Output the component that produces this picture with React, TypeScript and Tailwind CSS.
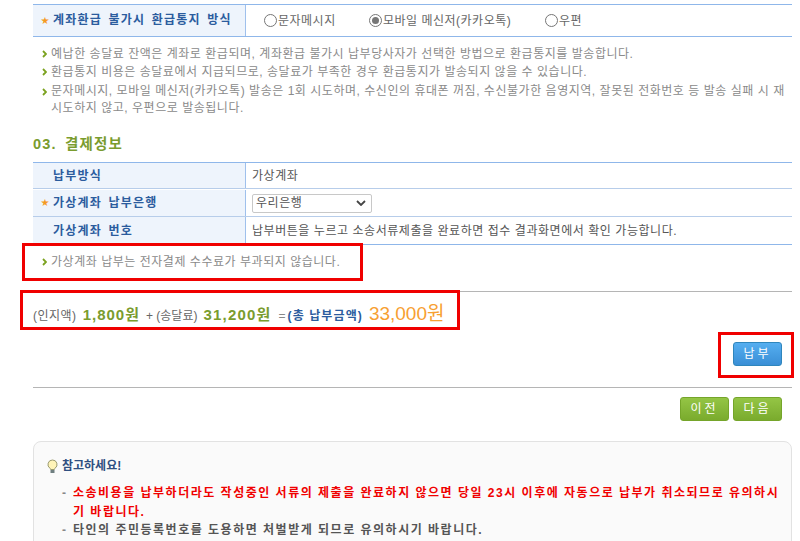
const font = { fontFamily: '"Liberation Sans", "Noto Sans CJK KR", sans-serif' };

function Bullet({ children, extra }: { children: React.ReactNode; extra?: string }) {
  return (
    <li className={`flex items-start pl-[9px] ${extra ?? ""}`}>
      <svg width="5" height="8" viewBox="0 0 5 8" className="mt-[5px] mr-[4px] shrink-0">
        <path d="M1 1l3 3-3 3" fill="none" stroke="#7ba21f" strokeWidth="1.8" />
      </svg>
      <span>{children}</span>
    </li>
  );
}

function Star() {
  return <span className="absolute left-[8px] top-1/2 -translate-y-1/2 text-[8px] leading-[10px] text-[#f59a23]">★</span>;
}

function Radio({ on, label, w }: { on?: boolean; label: string; w: string }) {
  return (
    <span className={`flex items-center ${w}`}>
      <span className="w-[13px] h-[13px] rounded-full border border-[#767676] bg-white flex items-center justify-center shrink-0">
        {on && <span className="w-[7px] h-[7px] rounded-full bg-[#777]" />}
      </span>
      <span className="ml-[1px]">{label}</span>
    </span>
  );
}

function Row({ label, star, children, h }: { label: string; star?: boolean; children: React.ReactNode; h: string }) {
  return (
    <div className={`flex ${h}`}>
      <div className="relative w-[213px] shrink-0 bg-[#eef4fc] border-r border-[#9fc0ec] flex items-center pl-[20px] font-bold text-[#2b5c9e] text-[12px] tracking-[1.2px] [word-spacing:2px]">
        {star && <Star />}
        {label}
      </div>
      <div className="flex-1 flex items-center pl-[6px] text-[#555] text-[12px] tracking-[0.55px]">{children}</div>
    </div>
  );
}

export default function App() {
  return (
    <div className="relative w-[800px] h-[541px] overflow-hidden bg-white" style={font}>
      <div className="ml-[33px] w-[759px] pt-[4px]">
        <div className="border-y border-[#8fb7ea]">
          <div className="flex h-[31px]">
            <div className="relative w-[213px] shrink-0 bg-[#eef4fc] border-r border-[#9fc0ec] flex items-center pl-[20px] font-bold text-[#2b5c9e] text-[12px] tracking-[1.2px] [word-spacing:2px] pb-[2px]">
              <Star />
              계좌환급 불가시 환급통지 방식
            </div>
            <div className="flex-1 flex items-center pl-[18px] text-[12px] text-[#666] tracking-[0.5px]">
              <Radio label="문자메시지" w="w-[105px]" />
              <Radio on label="모바일 메신저(카카오톡)" w="w-[176px]" />
              <Radio label="우편" w="w-[50px]" />
            </div>
          </div>
        </div>

        <ul className="mt-[8px] text-[12px] leading-[18px] text-[#8a8a8a] tracking-[0.53px]">
          <Bullet>예납한 송달료 잔액은 계좌로 환급되며, 계좌환급 불가시 납부당사자가 선택한 방법으로 환급통지를 발송합니다.</Bullet>
          <Bullet>환급통지 비용은 송달료에서 지급되므로, 송달료가 부족한 경우 환급통지가 발송되지 않을 수 있습니다.</Bullet>
          <Bullet extra="mt-[2px] leading-[17px]">
            문자메시지, 모바일 메신저(카카오톡) 발송은 1회 시도하며, 수신인의 휴대폰 꺼짐, 수신불가한 음영지역, 잘못된 전화번호 등 발송 실패 시 재 시도하지 않고, 우편으로 발송됩니다.
          </Bullet>
        </ul>

        <h3 className="mt-[17px] text-[14.5px] leading-[20px] font-bold text-[#7a9c2e] tracking-[1.2px] [word-spacing:3px]">03. 결제정보</h3>

        <div className="mt-[8px] border-y border-[#8fb7ea] divide-y divide-[#b7cdea]">
          <Row label="납부방식" h="h-[26px]">가상계좌</Row>
          <Row label="가상계좌 납부은행" star h="h-[28px] pt-[1px]">
            <span className="w-[120px] h-[19px] border border-[#c8c8c8] rounded-[2px] flex items-center justify-between px-[3px]">
              우리은행
              <svg width="10" height="6" viewBox="0 0 10 6" className="mr-[2px]">
                <path d="M1 1l4 4 4-4" fill="none" stroke="#444" strokeWidth="1.8" />
              </svg>
            </span>
          </Row>
          <Row label="가상계좌 번호" h="h-[27px]">
            납부버튼을 누르고 소송서류제출을 완료하면 접수 결과화면에서 확인 가능합니다.
          </Row>
        </div>

        <ul className="mt-[8px] text-[12px] leading-[18px] text-[#8a8a8a] tracking-[0.53px]">
          <Bullet>가상계좌 납부는 전자결제 수수료가 부과되지 않습니다.</Bullet>
        </ul>

        <div className="mt-[20px] border-t border-[#b5b5b5] pt-[8px] h-[42px] flex items-baseline whitespace-nowrap text-[12px] text-[#666]">
          <span className="tracking-[0.5px]">(인지액)</span>
          <span className="ml-[6px] text-[15px] font-bold text-[#7a9c2e] tracking-[1px]">1,800원</span>
          <span className="ml-[6px]">+ (송달료)</span>
          <span className="ml-[6px] text-[15px] font-bold text-[#7a9c2e] tracking-[1.2px]">31,200원</span>
          <span className="ml-[7px] text-[#888]">=</span>
          <span className="ml-[2px] font-bold text-[#2b5c9e] tracking-[1.1px]">(총 납부금액)</span>
          <span className="ml-[6px] text-[19px] text-[#f7a032]">33,000원</span>
        </div>

        <div className="flex justify-end pr-[10px] mt-[9px]">
          <button className="w-[49px] h-[24px] rounded-[3px] border border-[#2f86bd] bg-gradient-to-b from-[#55aef0] to-[#3a8fd6] text-white text-[12px] tracking-[3px]">납부</button>
        </div>

        <div className="mt-[21px] border-t border-[#b5b5b5] pt-[9px] flex justify-end gap-[4px] pr-[10px]">
          <button className="w-[49px] h-[24px] rounded-[3px] border border-[#75a52a] bg-gradient-to-b from-[#94c545] to-[#7aab2d] text-white text-[12px] tracking-[3px]">이전</button>
          <button className="w-[49px] h-[24px] rounded-[3px] border border-[#75a52a] bg-gradient-to-b from-[#94c545] to-[#7aab2d] text-white text-[12px] tracking-[3px]">다음</button>
        </div>

        <div className="mt-[20px] h-[140px] rounded-[8px] border border-[#e2e2e2] bg-[#fafafa] pl-[12px] pt-[15px]">
          <div className="flex items-center text-[12px] font-bold text-[#2f4f80]">
            <svg width="13" height="15" viewBox="0 0 13 15" className="mr-[3px]">
              <path d="M6.5 1a4.5 4.5 0 0 0-2.6 8.2c.5.4.7.9.7 1.3h3.8c0-.4.2-.9.7-1.3A4.5 4.5 0 0 0 6.5 1z" fill="#fff4b8" stroke="#9a9a70" />
              <rect x="4.5" y="11" width="4" height="3" fill="#6f7f80" />
            </svg>
            참고하세요!
          </div>
          <div className="mt-[9px] pl-[16px] pr-[6px] text-[12px] leading-[18.5px] font-bold">
            <div className="flex">
              <span className="text-[#888] w-[11px] shrink-0">-</span>
              <span className="text-[#f00000] tracking-[1.5px]">소송비용을 납부하더라도 작성중인 서류의 제출을 완료하지 않으면 당일 23시 이후에 자동으로 납부가 취소되므로 유의하시기 바랍니다.</span>
            </div>
            <div className="flex">
              <span className="text-[#888] w-[11px] shrink-0">-</span>
              <span className="text-[#555] tracking-[1.5px]">타인의 주민등록번호를 도용하면 처벌받게 되므로 유의하시기 바랍니다.</span>
            </div>
          </div>
        </div>
      </div>

      <div className="absolute left-[22px] top-[243px] w-[341px] h-[38px] border-[3px] border-[#f00000]" />
      <div className="absolute left-[20px] top-[290px] w-[440px] h-[40px] border-[3px] border-[#f00000]" />
      <div className="absolute left-[718px] top-[332px] w-[76px] h-[46px] border-[3px] border-[#f00000]" />
    </div>
  );
}
